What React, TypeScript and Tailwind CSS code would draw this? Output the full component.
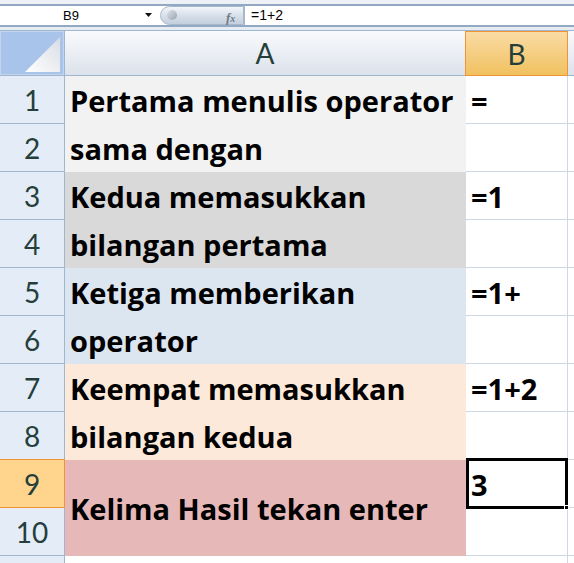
import React from "react";

const cellFont = { fontFamily: "Lato, 'Open Sans', sans-serif" };
const boldFont = { fontFamily: "'Open Sans', Lato, sans-serif" };

type Group = { bg: string; lines: [string, string]; b: string };

const groups: Group[] = [
  { bg: "bg-[#f2f2f2]", lines: ["Pertama menulis operator", "sama dengan"], b: "=" },
  { bg: "bg-[#d9d9d9]", lines: ["Kedua memasukkan", "bilangan pertama"], b: "=1" },
  { bg: "bg-[#dce6f1]", lines: ["Ketiga memberikan", "operator"], b: "=1+" },
  { bg: "bg-[#fde9d9]", lines: ["Keempat memasukkan", "bilangan kedua"], b: "=1+2" },
];

function RowNum({ n, active }: { n?: number; active?: boolean }) {
  return (
    <div
      className={
        "w-[65px] flex items-center justify-center border-b border-r text-[28px] text-[#243f3b] " +
        (active ? "bg-[#ffd58d] border-[#f29436] border-t -mt-px h-[49px]" : "h-12 bg-[#e4ecf7] border-[#9eb6ce]")
      }
      style={cellFont}
    >
      <span className="leading-none">{n}</span>
    </div>
  );
}

export default function App() {
  return (
    <div className="w-[574px] h-[563px] overflow-hidden bg-white relative" style={{ fontFamily: "Lato, sans-serif" }}>
      {/* formula bar */}
      <div className="h-[4px] bg-[#eef2f7]" />
      <div className="h-[2px] bg-[#93a8c2]" />
      <div className="h-[19px] flex bg-white">
        <div className="w-[160px] flex items-center relative">
          <span className="ml-[63px] text-[13px] text-black leading-none" style={{ fontFamily: "'Liberation Sans', sans-serif" }}>B9</span>
          <svg className="absolute left-[145px] top-[7px]" width="7" height="4" viewBox="0 0 7 4">
            <path d="M0 0 H7 L3.5 4 Z" fill="#111" />
          </svg>
        </div>
        <div className="w-[84px] h-[19px] rounded-l-full bg-gradient-to-b from-[#f3f6fa] via-[#d7e0ea] to-[#c3cfdd] border border-[#a8b8cb] relative">
          <div className="absolute left-[6px] top-[3px] w-[10px] h-[10px] rounded-full bg-gradient-to-br from-[#e0e4ea] to-[#9aa3ad]" />
          <span className="absolute left-[65px] top-[1px] text-[13px] italic font-bold text-[#6e7a83]" style={{ fontFamily: "'Liberation Serif', serif" }}>f<span className="text-[10px]">x</span></span>
        </div>
        <div className="w-px bg-[#a8b8cb]" />
        <div className="flex items-center pl-[6px] text-[14px] text-black" style={{ fontFamily: "'Liberation Sans', sans-serif" }}>=1+2</div>
      </div>
      <div className="h-[2px] bg-[#93a8c2]" />
      <div className="h-[3px] bg-[#e7ecf3]" />
      <div className="h-px bg-[#9eb6ce]" />

      {/* header row */}
      <div className="flex h-[45px]">
        <div className="w-[65px] h-[45px] bg-[#c4d6ef] p-px border-r border-b border-[#9eb6ce]">
          <div className="w-full h-full bg-[#a9c4eb] relative">
            <svg className="absolute inset-0" width="63" height="43" viewBox="0 0 63 43">
              <defs>
                <linearGradient id="tri" x1="0" y1="1" x2="1" y2="0">
                  <stop offset="0" stopColor="#ffffff" />
                  <stop offset="1" stopColor="#d9dde3" />
                </linearGradient>
              </defs>
              <path d="M24 40 L59 5 L59 40 Z" fill="url(#tri)" />
            </svg>
          </div>
        </div>
        <div
          className="w-[400px] h-[45px] bg-gradient-to-b from-[#f9fafc] to-[#dce2eb] border-b border-[#9eb6ce] flex items-center justify-center text-[28px] text-[#243f3b]"
          style={cellFont}
        >
          A
        </div>
        <div
          className="w-[103px] h-[45px] bg-gradient-to-b from-[#f9dba3] to-[#f1c15e] border border-[#f29436] flex items-center justify-center text-[28px] text-[#243f3b]"
          style={cellFont}
        >
          B
        </div>
        <div className="flex-1 h-[45px] bg-gradient-to-b from-[#f9fafc] to-[#dce2eb] border-b border-[#9eb6ce]" />
      </div>

      {/* body */}
      <div className="flex">
        {/* row numbers */}
        <div className="flex flex-col">
          {[1, 2, 3, 4, 5, 6, 7, 8].map((n) => (
            <RowNum key={n} n={n} />
          ))}
          <RowNum n={9} active />
          <RowNum n={10} />
          <RowNum />
        </div>

        {/* column A */}
        <div className="flex flex-col w-[401px]">
          {groups.map((g, i) => (
            <div key={i} className={"h-24 pl-[5px] flex flex-col " + g.bg} style={boldFont}>
              {g.lines.map((l, j) => (
                <div key={j} className="h-12 leading-[48px] pt-[1px] text-[29px] font-bold text-black whitespace-nowrap">
                  {l}
                </div>
              ))}
            </div>
          ))}
          <div className="h-24 pl-[5px] flex items-center bg-[#e6b8b7]" style={boldFont}>
            <span className="text-[29px] font-bold text-black pt-[2px]">Kelima Hasil tekan enter</span>
          </div>
          <div className="h-12 bg-white border-b border-[#d0d7e5]" />
        </div>

        {/* column B */}
        <div className="flex flex-col w-[102px] relative">
          {groups.map((g, i) => (
            <React.Fragment key={i}>
              <div className="h-12 border-b border-r border-[#d0d7e5] pl-[5px] leading-[46px] pt-[2px] text-[29px] font-bold text-black" style={boldFont}>
                {g.b}
              </div>
              <div className="h-12 border-b border-r border-[#d0d7e5]" />
            </React.Fragment>
          ))}
          <div className="h-12 border-b border-r border-[#d0d7e5] pl-[5px] leading-[46px] pt-[2px] text-[29px] font-bold text-black" style={boldFont}>
            3
          </div>
          <div className="h-12 border-b border-r border-[#d0d7e5]" />
          <div className="h-12 border-b border-r border-[#d0d7e5]" />
          {/* selection box */}
          <div className="absolute left-0 top-[382px] w-[102px] h-[51px] border-[3px] border-black pointer-events-none">
            <div className="absolute -right-[4px] -bottom-[4px] w-[5px] h-[5px] bg-black border border-white" />
          </div>
        </div>
        <div className="flex-1 flex flex-col">
          {Array.from({ length: 11 }).map((_, i) => (
            <div key={i} className="h-12 border-b border-[#d0d7e5]" />
          ))}
        </div>
      </div>
    </div>
  );
}
